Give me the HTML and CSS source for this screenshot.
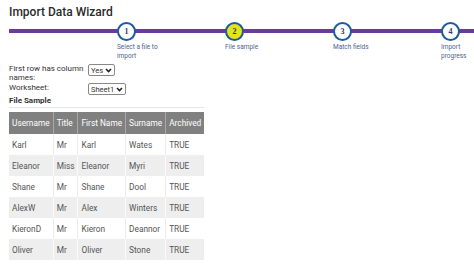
FILE: index.html
```html
<!DOCTYPE html>
<html lang="en">

<head>
    <meta charset="UTF-8">
    <meta name="viewport" content="width=device-width, initial-scale=1.0">
    <title>Import Data Wizard</title>
    <link rel="stylesheet" href="styles.css">
</head>

<body>
    <h1 class="page-title">Import Data Wizard</h1>

    <div class="wizard">
        <div class="step">
            <span class="step-num">1</span>
            <span class="step-label">Select a file to import</span>
        </div>
        <div class="step current">
            <span class="step-num">2</span>
            <span class="step-label">File sample</span>
        </div>
        <div class="step">
            <span class="step-num">3</span>
            <span class="step-label">Match fields</span>
        </div>
        <div class="step">
            <span class="step-num">4</span>
            <span class="step-label">Import progress</span>
        </div>
    </div>

    <div class="options">
        <label class="opt-label">First row has column names:</label>
        <select class="opt-select">
            <option>Yes</option>
            <option>No</option>
        </select>
        <label class="opt-label">Worksheet:</label>
        <select class="opt-select">
            <option>Sheet1</option>
        </select>
    </div>

    <h2 class="section-title">File Sample</h2>

    <table class="sample">
        <thead>
            <tr>
                <th>Username</th>
                <th>Title</th>
                <th>First Name</th>
                <th>Surname</th>
                <th>Archived</th>
            </tr>
        </thead>
        <tbody>
            <tr><td>Karl</td><td>Mr</td><td>Karl</td><td>Wates</td><td>TRUE</td></tr>
            <tr><td>Eleanor</td><td>Miss</td><td>Eleanor</td><td>Myri</td><td>TRUE</td></tr>
            <tr><td>Shane</td><td>Mr</td><td>Shane</td><td>Dool</td><td>TRUE</td></tr>
            <tr><td>AlexW</td><td>Mr</td><td>Alex</td><td>Winters</td><td>TRUE</td></tr>
            <tr><td>KieronD</td><td>Mr</td><td>Kieron</td><td>Deannor</td><td>TRUE</td></tr>
            <tr><td>Oliver</td><td>Mr</td><td>Oliver</td><td>Stone</td><td>TRUE</td></tr>
        </tbody>
    </table>
</body>

</html>
```

FILE: styles.css
```css
body {
    margin: 0;
    padding: 0 0 0 9px;
    overflow: hidden;
    background-color: #fff;
    font-family: Roboto, "Liberation Sans", sans-serif;
    color: #333;
}

.page-title {
    margin: 0;
    padding-top: 4px;
    height: 17px;
    font-size: 12px;
    font-weight: 500;
    line-height: 17px;
    color: #2b2b2b;
}

/* step bar */
.wizard {
    display: flex;
    height: 43px;
    padding-left: 108px;
    background: linear-gradient(#6a3b9c, #6a3b9c) no-repeat 0 8px / 100% 4px;
}

.step {
    width: 108px;
    flex-shrink: 0;
}

.step:last-child {
    width: 33px;
}

.step-num {
    display: flex;
    align-items: center;
    justify-content: center;
    box-sizing: border-box;
    width: 19px;
    height: 19px;
    margin-top: 1px;
    border: 2px solid #1c5c9c;
    border-radius: 50%;
    background-color: #fff;
    font-family: "Liberation Serif", serif;
    font-weight: bold;
    font-size: 8px;
    color: #2a3a6a;
}

.current .step-num {
    background-color: #e4e41c;
}

.step-label {
    display: block;
    width: 44px;
    margin-top: 2px;
    font-size: 6.5px;
    line-height: 9px;
    color: #4f5f8f;
}

.step:last-child .step-label {
    width: 33px;
}

/* options */
.options {
    display: grid;
    grid-template-columns: 79px auto;
    row-gap: 1px;
    align-items: start;
    justify-items: start;
    font-size: 8px;
    line-height: 9px;
}

.opt-select {
    -webkit-appearance: none;
    appearance: none;
    font-family: Roboto, "Liberation Sans", sans-serif;
    font-size: 7.5px;
    height: 12px;
    padding: 0 10px 0 2px;
    border: 1px solid #888;
    border-radius: 2px;
    background: #fff url("data:image/svg+xml,%3Csvg xmlns='http://www.w3.org/2000/svg' width='7' height='5' viewBox='0 0 7 5'%3E%3Cpath d='M1 1l2.5 2.5L6 1' fill='none' stroke='%23222' stroke-width='1.6'/%3E%3C/svg%3E") no-repeat right 2px center;
    color: #333;
}

.section-title {
    width: 195px;
    margin: 1px 0 0;
    padding-bottom: 2px;
    border-bottom: 1px solid #e6e6e6;
    font-size: 8px;
    font-weight: bold;
    line-height: 9px;
    color: #333;
}

/* sample table */
.sample {
    margin-top: 4px;
    border-collapse: collapse;
    font-size: 8.3px;
    color: #555;
}

.sample th {
    height: 22px;
    padding: 0 3px;
    background-color: #808080;
    border-right: 1px solid #a8a8a8;
    color: #fff;
    font-weight: normal;
    text-align: left;
}

.sample td {
    height: 21px;
    padding: 0 3px;
    border-right: 1px solid #ececec;
}

.sample th:last-child,
.sample td:last-child {
    border-right: none;
}

.sample tbody tr:nth-child(even) {
    background-color: #eeeeee;
}

.sample tbody tr:nth-child(even) td {
    border-right-color: #fafafa;
}
```
